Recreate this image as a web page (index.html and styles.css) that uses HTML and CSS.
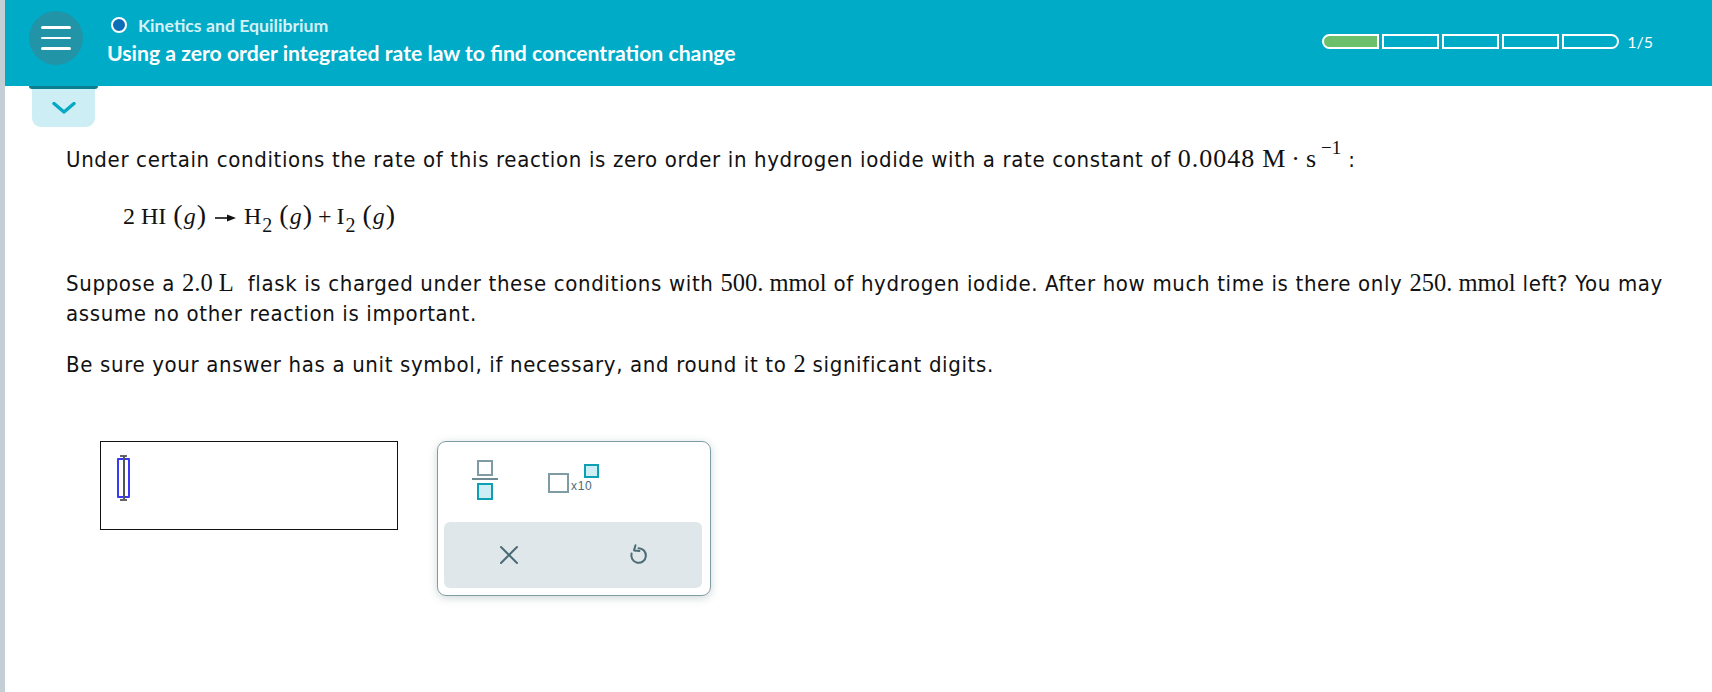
FILE: index.html
```html
<!DOCTYPE html>
<html>
<head>
<meta charset="utf-8">
<link rel="stylesheet" href="styles.css">
</head>
<body>
<div class="page">
  <div class="strip"></div>
  <div class="main">
    <header class="topbar">
      <div class="menu"><span></span><span></span><span></span></div>
      <div class="titles">
        <div class="topic"><span class="dot"></span>Kinetics and Equilibrium</div>
        <div class="title">Using a zero order integrated rate law to find concentration change</div>
      </div>
      <div class="progress">
        <div class="bar">
          <div class="seg done"></div>
          <div class="seg"></div>
          <div class="seg"></div>
          <div class="seg"></div>
          <div class="seg last"></div>
        </div>
        <span class="count">1/5</span>
      </div>
    </header>
    <div class="tabrow">
      <div class="tab">
        <div class="tabedge"></div>
        <svg class="chev" width="24" height="12" viewBox="0 0 24 12"><path d="M2 1.5 L12 10 L22 1.5" fill="none" stroke="#06a8c4" stroke-width="3.4" stroke-linecap="round" stroke-linejoin="round"/></svg>
      </div>
    </div>
    <div class="content">
      <p class="para first">Under certain conditions the rate of this reaction is zero order in hydrogen iodide with a rate constant of <span class="m big num">0.0048</span> <span class="m big">M<span class="cdot">·</span>s<sup class="exp">−1</sup></span> :</p>
      <div class="eq"><span class="m">2<span class="sp"></span>HI<span class="gap"></span><span class="par">(</span><i>g</i><span class="par">)</span><svg class="arrow" width="22" height="10" viewBox="0 0 22 10"><path d="M0 5 H14" stroke="#111" stroke-width="1.6"/><path d="M12 1.5 L21 5 L12 8.5 Z" fill="#111"/></svg>H<sub>2</sub><span class="gap"></span><span class="par">(</span><i>g</i><span class="par">)</span><span class="plus">+</span>I<sub>2</sub><span class="gap"></span><span class="par">(</span><i>g</i><span class="par">)</span></span></div>
      <p class="para">Suppose a <span class="m">2.0 L</span>&nbsp; flask is charged under these conditions with <span class="m">500. mmol</span> of hydrogen iodide. After how much time is there only <span class="m">250. mmol</span> left? You may assume no other reaction is important.</p>
      <p class="para third">Be sure your answer has a unit symbol, if necessary, and round it to <span class="m">2</span> significant digits.</p>
      <div class="answer">
        <div class="inputbox">
          <div class="cursor"><span class="tick top"></span><span class="caret"></span><span class="tick bot"></span></div>
        </div>
        <div class="keypad">
          <div class="keys">
            <div class="frac">
              <span class="sq gray"></span>
              <span class="fline"></span>
              <span class="sq teal"></span>
            </div>
            <div class="sci">
              <span class="sq big gray"></span>
              <span class="x10">x10</span>
              <span class="sq small teal"></span>
            </div>
          </div>
          <div class="actions">
            <div class="act">
              <svg width="22" height="22" viewBox="0 0 22 22"><path d="M3 3 L19 19 M19 3 L3 19" stroke="#4b6c77" stroke-width="2" stroke-linecap="round"/></svg>
            </div>
            <div class="act">
              <svg width="24" height="24" viewBox="0 0 24 24"><path d="M12.5 5.2 A7.3 7.3 0 1 1 5.6 10.4" fill="none" stroke="#4b6c77" stroke-width="2" stroke-linecap="round"/><path d="M9.5 2.2 L8 7.4 L13.4 8" fill="none" stroke="#4b6c77" stroke-width="2" stroke-linecap="round" stroke-linejoin="round"/></svg>
            </div>
          </div>
        </div>
      </div>
    </div>
  </div>
</div>
</body>
</html>
```

FILE: styles.css
```css
* { box-sizing: border-box; }
html, body { margin: 0; padding: 0; background: #fff; }
body { width: 1712px; height: 692px; overflow: hidden; }

.page { display: flex; height: 692px; }
.strip { width: 5px; flex: none; background: #c4cfd5; }
.main { flex: 1; display: flex; flex-direction: column; min-width: 0; }

.topbar {
  height: 86px;
  background: #00abc8;
  display: flex;
  align-items: flex-start;
  padding-left: 24px;
  font-family: Lato, "Open Sans", sans-serif;
  color: #fff;
}
.menu {
  width: 54px; height: 54px; margin-top: 11px;
  border-radius: 50%;
  background: #2194a8;
  display: flex; flex-direction: column; align-items: center; justify-content: center;
  gap: 8px;
}
.menu span { display: block; width: 30px; height: 2.5px; background: #fff; border-radius: 2px; }

.titles { margin-left: 24px; padding-top: 13px; }
.topic {
  display: flex; align-items: center;
  font-size: 17.7px; font-weight: 700; color: #d4f1f6;
  height: 24px; padding-left: 4px;
}
.dot {
  width: 16px; height: 16px; border-radius: 50%;
  background: #0b6db6; border: 2px solid #fff;
  margin-right: 11px;
}
.title { font-size: 21.2px; font-weight: 700; margin-top: 3px; }

.progress { margin-left: auto; margin-right: 59px; margin-top: 32px; display: flex; align-items: center; }
.bar { display: flex; gap: 3px; }
.seg { width: 57px; height: 15px; border: 2px solid #fff; }
.seg.done { background: #6cc06b; border-radius: 8px 0 0 8px; }
.seg.last { border-radius: 0 8px 8px 0; }
.count { font-size: 16px; margin-left: 8px; color: #fff; }

.tabrow { height: 41px; padding-left: 24px; }
.tab {
  position: relative;
  width: 69px; height: 41px;
  display: flex; justify-content: center;
}
.tab::before {
  content: ""; position: absolute; left: 3px; right: 3px; top: 0; bottom: 0;
  background: #cdeef4; border-radius: 0 0 9px 9px;
}
.tabedge {
  position: absolute; left: 0; right: 0; top: 0; height: 3px;
  background: #0b7d90; border-radius: 0 0 3px 3px;
}
.chev { position: relative; margin-top: 16px; }

.content {
  padding-left: 61px; padding-right: 6px;
  font-family: "DejaVu Sans Condensed", "DejaVu Sans", sans-serif;
  font-size: 22px; letter-spacing: 0.65px; color: #111;
}
.para { margin: 0; line-height: 30px; }
.para.first { margin-top: 17px; }
.m { font-family: "Liberation Serif", "Times New Roman", serif; font-size: 24.5px; letter-spacing: 0; }
.m.big { font-size: 26px; }
.m.num { letter-spacing: 1px; }
.cdot { margin: 0 6px; }
.exp { font-size: 19px; vertical-align: 13px; line-height: 0; margin-left: 5px; }

.eq {
  margin: 24px 0 0 57px; height: 69px;
}
.eq .m { font-size: 24px; }
.eq .sp { width: 6px; display: inline-block; }
.eq .gap { width: 6px; display: inline-block; }
.eq .par { font-size: 28px; margin: 0 1px; }
.eq i { font-size: 24px; font-family: "Liberation Serif", serif; }
.eq sub { font-size: 20px; vertical-align: -8px; line-height: 0; margin-left: 1px; font-family: "Liberation Serif", serif; }
.eq .arrow { margin: 0 7px 0 8px; vertical-align: 1px; }
.eq .plus { margin: 0 5px; }

.para.third { margin-top: 20px; }

.answer { display: flex; align-items: flex-start; margin-top: 61px; margin-left: 34px; gap: 39px; }
.inputbox { width: 298px; height: 89px; border: 1px solid #111; padding: 13px 0 0 16px; }
.cursor { position: relative; width: 13px; height: 46px; }
.caret {
  position: absolute; left: 0; top: 3px; width: 13px; height: 40px;
  border: 2px solid #3a3af5; border-radius: 1px;
}
.caret::after {
  content: ""; position: absolute; left: 3.5px; top: -4px; width: 2px; height: 44px; background: #555;
}
.tick { position: absolute; left: 3px; width: 7px; height: 2px; background: #666; }
.tick.top { top: 0; }
.tick.bot { bottom: 0; }

.keypad {
  width: 274px; height: 155px;
  border: 1px solid #7f9ba4; border-radius: 9px;
  box-shadow: 0 2px 8px rgba(60, 90, 100, 0.25);
  padding: 0 8px 7px 6px;
  display: flex; flex-direction: column;
}
.keys { height: 80px; display: flex; align-items: flex-start; padding-left: 28px; }
.frac { width: 26px; margin-top: 18px; display: flex; flex-direction: column; align-items: center; }
.sq { display: block; border: 2px solid #7f9ba4; background: #fff; }
.sq.gray { width: 16px; height: 16px; }
.sq.teal { width: 16px; height: 17px; border-color: #0e9fb7; background: #cdeef4; }
.fline { display: block; width: 26px; height: 2px; background: #6f8a93; margin: 2px 0 3px; }
.sci { position: relative; margin-left: 50px; margin-top: 31px; display: flex; align-items: flex-end; }
.sq.big { width: 21px; height: 20px; }
.x10 { font-family: "Liberation Sans", Arial, sans-serif; font-size: 12px; color: #4b6c77; margin-left: 2px; line-height: 12px; margin-bottom: 1px; }
.sq.small { position: absolute; left: 36px; top: -9px; width: 15px; height: 14px; }

.actions {
  flex: 1; background: #dfe7ea; border-radius: 6px;
  display: flex;
}
.act { flex: 1; display: flex; align-items: center; justify-content: center; }
```
